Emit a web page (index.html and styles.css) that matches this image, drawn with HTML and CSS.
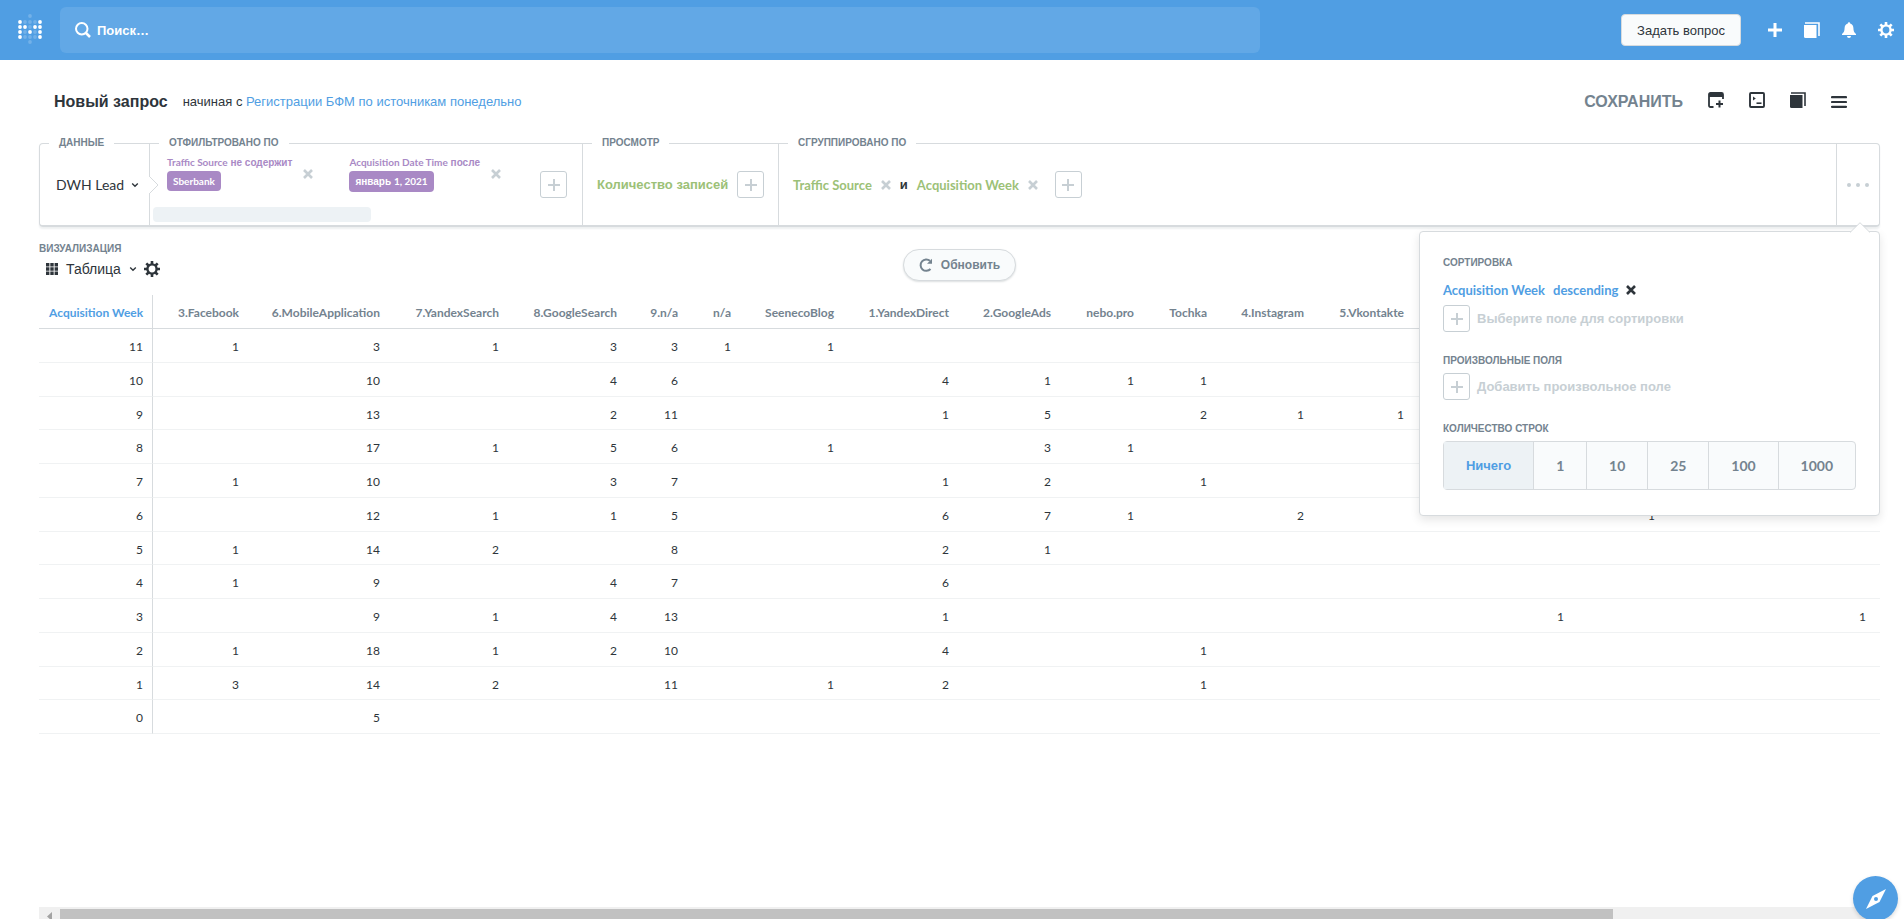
FILE: index.html
```html
<!DOCTYPE html>
<html lang="ru">
<head>
    <meta charset="UTF-8">
    <meta name="viewport" content="width=device-width, initial-scale=1">
    <title>Новый запрос</title>
    <link rel="stylesheet" href="styles.css">
</head>
<body>

<svg class="sprite" aria-hidden="true">
    <symbol id="i-search" viewBox="0 0 32 32"><circle cx="13.5" cy="13.5" r="11.5" fill="none" stroke="currentColor" stroke-width="4"/><path d="M22 22l8 8" stroke="currentColor" stroke-width="5"/></symbol>
    <symbol id="i-plus" viewBox="0 0 14 14"><path d="M7 0v14M0 7h14" stroke="currentColor" stroke-width="3"/></symbol>
    <symbol id="i-add" viewBox="0 0 12 12"><path d="M6 0v12M0 6h12" stroke="currentColor" stroke-width="2"/></symbol>
    <symbol id="i-close" viewBox="0 0 10 10"><path d="M1 1l8 8M9 1L1 9" stroke="currentColor" stroke-width="2.6"/></symbol>
    <symbol id="i-all" viewBox="0 0 16 16"><path d="M0 3h12.5v13H1.500Q0 16 0 14.500z" fill="currentColor"/><path d="M1 1H15v13" fill="none" stroke="currentColor" stroke-width="1.600"/></symbol>
    <symbol id="i-bell" viewBox="0 0 14 16"><path d="M5.800 1.500a1.200 1.200 0 0 1 2.400 0C10.500 2 11.300 4 11.400 6c.1 3 .6 4.500 2.600 6v1H0v-1c2-1.500 2.500-3 2.600-6 .1-2 .9-4 3.200-4.500zM5 14h4a2 2 0 0 1-4 0z" fill="currentColor"/></symbol>
    <symbol id="i-gear" viewBox="0 0 16 16"><circle cx="8" cy="8" r="4.600" fill="none" stroke="currentColor" stroke-width="2.400"/><g stroke="currentColor" stroke-width="2.600"><path d="M8 0v3M8 13v3M0 8h3M13 8h3M2.300 2.300l2.200 2.200M11.500 11.500l2.200 2.200M13.700 2.300l-2.200 2.200M4.500 11.500l-2.200 2.200"/></g></symbol>
    <symbol id="i-dash" viewBox="0 0 16 16"><path d="M5.500 15H2.500Q1 15 1 13.500V2.500Q1 1 2.500 1h11Q15 1 15 2.500V7" fill="none" stroke="currentColor" stroke-width="1.800"/><path d="M1 1h14v4H1z" fill="currentColor"/><path d="M11.500 8.500v7M8 12h7" stroke="currentColor" stroke-width="2"/></symbol>
    <symbol id="i-sql" viewBox="0 0 16 16"><rect x="1" y="1" width="14" height="14" rx="1" fill="none" stroke="currentColor" stroke-width="1.900"/><path d="M4 4.500l2.800 2L4 8.500z" fill="currentColor"/><path d="M7.500 11.200h5" stroke="currentColor" stroke-width="1.600"/></symbol>
    <symbol id="i-menu" viewBox="0 0 16 12"><path d="M1 1.200h14M1 6h14M1 10.800h14" stroke="currentColor" stroke-width="2.200" stroke-linecap="round"/></symbol>
    <symbol id="i-chevron" viewBox="0 0 8 6"><path d="M1.200 1.500L4 4.200l2.800-2.700" fill="none" stroke="currentColor" stroke-width="1.400"/></symbol>
    <symbol id="i-grid" viewBox="0 0 12 12"><path d="M0 0h3.400v3.400H0zM4.300 0h3.400v3.400H4.300zM8.600 0H12v3.400H8.600zM0 4.300h3.400v3.400H0zM4.300 4.300h3.400v3.400H4.300zM8.600 4.300H12v3.400H8.600zM0 8.600h3.400V12H0zM4.300 8.600h3.400V12H4.300zM8.600 8.600H12V12H8.600z" fill="currentColor"/></symbol>
    <symbol id="i-refresh" viewBox="0 0 14 14"><path d="M11.500 11A5.700 5.700 0 1 1 11 2.800" fill="none" stroke="currentColor" stroke-width="2"/><path d="M13 .8v5H8z" fill="currentColor"/></symbol>
</svg>

<header class="nav">
    <a href="#" class="logo" aria-label="Metabase">
        <svg id="logo" width="24" height="32" viewBox="0 0 24 32"></svg>
    </a>
    <div class="search">
        <svg class="icon-16"><use href="#i-search"/></svg>
        <input type="text" placeholder="Поиск…" aria-label="Поиск">
    </div>
    <button class="ask">Задать вопрос</button>
    <nav class="nav-icons">
        <button aria-label="Создать"><svg class="icon-14"><use href="#i-plus"/></svg></button>
        <button aria-label="Обзор"><svg class="icon-16"><use href="#i-all"/></svg></button>
        <button aria-label="Уведомления"><svg class="icon-14 bell"><use href="#i-bell"/></svg></button>
        <button aria-label="Настройки"><svg class="icon-16"><use href="#i-gear"/></svg></button>
    </nav>
</header>

<main class="page">
    <div class="title-bar">
        <h1>Новый запрос</h1>
        <p>начиная с <a href="#">Регистрации БФМ по источникам понедельно</a></p>
        <div class="title-actions">
            <button class="save">СОХРАНИТЬ</button>
            <button aria-label="На дашборд"><svg class="icon-16"><use href="#i-dash"/></svg></button>
            <button aria-label="SQL"><svg class="icon-16"><use href="#i-sql"/></svg></button>
            <button aria-label="Справочник"><svg class="icon-16"><use href="#i-all"/></svg></button>
            <button aria-label="Меню"><svg class="icon-menu"><use href="#i-menu"/></svg></button>
        </div>
    </div>

    <div class="query">
        <section class="query-part data">
            <h2>ДАННЫЕ</h2>
            <button class="database lato">DWH Lead <svg class="icon-8"><use href="#i-chevron"/></svg></button>
            <svg class="pointer" viewBox="0 0 10 18"><path d="M0 0l9 9-9 9" fill="#fff" stroke="#d7dbde"/></svg>
        </section>
        <section class="query-part filters">
            <h2>ОТФИЛЬТРОВАНО ПО</h2>
            <div class="filter-list">
                <div class="filter">
                    <div>
                        <span class="filter-name"><span class="lato">Traffic Source</span> не содержит</span>
                        <span class="pill lato">Sberbank</span>
                    </div>
                    <button class="remove" aria-label="Удалить"><svg class="icon-10"><use href="#i-close"/></svg></button>
                </div>
                <div class="filter">
                    <div>
                        <span class="filter-name"><span class="lato">Acquisition Date Time</span> после</span>
                        <span class="pill">январь <span class="lato">1, 2021</span></span>
                    </div>
                    <button class="remove" aria-label="Удалить"><svg class="icon-10"><use href="#i-close"/></svg></button>
                </div>
            </div>
            <button class="add" aria-label="Добавить фильтр"><svg class="icon-12"><use href="#i-add"/></svg></button>
            <div class="filter-scroll"></div>
        </section>
        <section class="query-part view">
            <h2>ПРОСМОТР</h2>
            <a href="#" class="green">Количество записей</a>
            <button class="add" aria-label="Добавить показатель"><svg class="icon-12"><use href="#i-add"/></svg></button>
        </section>
        <section class="query-part groups">
            <h2>СГРУППИРОВАНО ПО</h2>
            <a href="#" class="green lato">Traffic Source</a>
            <button class="remove" aria-label="Удалить"><svg class="icon-10"><use href="#i-close"/></svg></button>
            <b>и</b>
            <a href="#" class="green lato">Acquisition Week</a>
            <button class="remove" aria-label="Удалить"><svg class="icon-10"><use href="#i-close"/></svg></button>
            <button class="add" aria-label="Добавить группировку"><svg class="icon-12"><use href="#i-add"/></svg></button>
        </section>
        <section class="query-part more">
            <button class="dots" aria-label="Ещё"><i></i><i></i><i></i></button>

            <div class="popover">
                <svg class="popover-arrow" viewBox="0 0 20 11"><path d="M0 10.500L10 .7l10 9.800" fill="#fff" stroke="#d7dbde"/></svg>
                <h3>СОРТИРОВКА</h3>
                <div class="sort">
                    <a href="#" class="lato">Acquisition Week</a>
                    <a href="#" class="lato">descending</a>
                    <button aria-label="Удалить сортировку"><svg class="icon-10"><use href="#i-close"/></svg></button>
                </div>
                <button class="add-row"><span class="add"><svg class="icon-12"><use href="#i-add"/></svg></span>Выберите поле для сортировки</button>
                <h3>ПРОИЗВОЛЬНЫЕ ПОЛЯ</h3>
                <button class="add-row"><span class="add"><svg class="icon-12"><use href="#i-add"/></svg></span>Добавить произвольное поле</button>
                <h3>КОЛИЧЕСТВО СТРОК</h3>
                <div class="limits lato">
                    <button class="active">Ничего</button>
                    <button>1</button>
                    <button>10</button>
                    <button>25</button>
                    <button>100</button>
                    <button>1000</button>
                </div>
            </div>
        </section>
    </div>

    <div class="vis-bar">
        <div class="vis">
            <h2>ВИЗУАЛИЗАЦИЯ</h2>
            <div class="vis-type">
                <button class="vis-name"><svg class="icon-12"><use href="#i-grid"/></svg>Таблица <svg class="icon-8"><use href="#i-chevron"/></svg></button>
                <button aria-label="Настройки визуализации"><svg class="icon-16"><use href="#i-gear"/></svg></button>
            </div>
        </div>
        <button class="refresh"><svg class="icon-14"><use href="#i-refresh"/></svg>Обновить</button>
        <div></div>
    </div>

    <div class="table-wrap">
        <table class="lato">
            <colgroup id="cols"></colgroup>
            <thead><tr id="head"></tr></thead>
            <tbody id="rows"></tbody>
        </table>
    </div>

    <div class="scrollbar">
        <svg width="21" height="17" viewBox="0 0 21 17"><path d="M13 5v9L8 9.500z" fill="#a3a3a3"/></svg>
        <div class="scroll-thumb"></div>
    </div>
</main>

<button class="help" aria-label="Помощь">
    <svg width="20" height="20" viewBox="0 0 20 20"><path d="M20 0l-6.500 13L0 20 6.500 7z" fill="#fff"/><circle cx="10" cy="10" r="2" fill="#509ee3"/></svg>
</button>

<script>
    // the logo is a 5x4 dot matrix with one faint dot above and one below
    const logoRows = ["..o..", "#ooo#", "##o##", "#o#o#", "#ooo#", "..o.."];
    const logoY = [2, 8, 13, 18, 23, 28];
    let dots = "";
    logoRows.forEach((row, y) => {
        row.split("").forEach((dot, x) => {
            if (dot !== ".") {
                dots += `<circle cx="${2 + x * 5}" cy="${logoY[y]}" r="1.9" fill="#fff" opacity="${dot === "#" ? 1 : 0.2}"/>`;
            }
        });
    });
    document.getElementById("logo").innerHTML = dots;

    const columns = [
        ["Acquisition Week", 114], ["3.Facebook", 96], ["6.MobileApplication", 141],
        ["7.YandexSearch", 119], ["8.GoogleSearch", 118], ["9.n/a", 61], ["n/a", 53],
        ["SeenecoBlog", 103], ["1.YandexDirect", 115], ["2.GoogleAds", 102],
        ["nebo.pro", 83], ["Tochka", 73], ["4.Instagram", 97], ["5.Vkontakte", 100],
        ["", 160], ["", 91], ["", 211], ["", 100]
    ];

    const data = [
        [11, 1, 3, 1, 3, 3, 1, 1],
        [10, "", 10, "", 4, 6, "", "", 4, 1, 1, 1],
        [9, "", 13, "", 2, 11, "", "", 1, 5, "", 2, 1, 1],
        [8, "", 17, 1, 5, 6, "", 1, "", 3, 1],
        [7, 1, 10, "", 3, 7, "", "", 1, 2, "", 1],
        [6, "", 12, 1, 1, 5, "", "", 6, 7, 1, "", 2, "", "", 1],
        [5, 1, 14, 2, "", 8, "", "", 2, 1],
        [4, 1, 9, "", 4, 7, "", "", 6],
        [3, "", 9, 1, 4, 13, "", "", 1, "", "", "", "", "", 1, "", 1],
        [2, 1, 18, 1, 2, 10, "", "", 4, "", "", 1],
        [1, 3, 14, 2, "", 11, "", 1, 2, "", "", 1],
        [0, "", 5]
    ];

    document.getElementById("cols").innerHTML = columns.map(c => `<col style="width: ${c[1]}px">`).join("");
    document.getElementById("head").innerHTML = columns.map(c => `<th>${c[0]}</th>`).join("");
    document.getElementById("rows").innerHTML = data.map(row =>
        "<tr>" + columns.map((c, i) => `<td>${row[i] === undefined ? "" : row[i]}</td>`).join("") + "</tr>"
    ).join("");
</script>

</body>
</html>
```
FILE: styles.css
```css
* {
    box-sizing: border-box;
}

body {
    margin: 0;
    height: 100vh;
    display: flex;
    flex-direction: column;
    overflow: hidden;
    background: #fff;
    color: #2e353b;
    font-family: "Liberation Sans", Arial, sans-serif;
    font-size: 13px;
}

h1, h2, h3, p {
    margin: 0;
}

a {
    color: #509ee3;
    text-decoration: none;
}

button {
    padding: 0;
    border: none;
    background: none;
    color: inherit;
    font: inherit;
    white-space: nowrap;
    cursor: pointer;
}

svg {
    display: block;
    flex: none;
}

.lato {
    font-family: Lato, "Liberation Sans", sans-serif;
}

.sprite {
    position: absolute;
    width: 0;
    height: 0;
}

.icon-8 { width: 8px; height: 6px; }
.icon-10 { width: 10px; height: 10px; }
.icon-12 { width: 12px; height: 12px; }
.icon-14 { width: 14px; height: 14px; }
.icon-16 { width: 16px; height: 16px; }
.icon-menu { width: 16px; height: 12px; }
.bell { height: 16px; }

/* top bar */
.nav {
    display: flex;
    align-items: center;
    flex: none;
    height: 60px;
    padding: 0 10px 0 18px;
    background: #509ee3;
    color: #fff;
}

.logo {
    width: 42px;
}

.search {
    display: flex;
    align-items: center;
    gap: 6px;
    flex: 1;
    max-width: 1200px;
    height: 46px;
    padding: 0 15px;
    border-radius: 6px;
    background: #62a8e6;
}

.search input {
    flex: 1;
    padding: 0;
    border: none;
    outline: none;
    background: none;
    color: #fff;
    font: bold 13px "Liberation Sans", Arial, sans-serif;
}

.search input::placeholder {
    color: #fff;
}

.ask {
    height: 32px;
    margin-left: auto;
    padding: 0 15px;
    border: 1px solid #d7dbde;
    border-radius: 4px;
    background: #f9fbfc;
    color: #2e353b;
}

.nav-icons {
    display: flex;
    align-items: center;
    gap: 22px;
    margin-left: 27px;
}

/* page */
.page {
    display: flex;
    flex-direction: column;
    flex: 1;
    min-height: 0;
    padding: 0 24px 0 39px;
}

.title-bar {
    display: flex;
    align-items: center;
    height: 83px;
    padding: 0 33px 0 15px;
}

.title-bar h1 {
    margin-right: 15px;
    font-size: 16px;
}

.title-actions {
    display: flex;
    align-items: center;
    gap: 25px;
    margin-left: auto;
}

.title-actions .icon-16 {
    margin-bottom: 4px;
}

.save {
    color: #74838f;
    font-size: 16px;
    font-weight: bold;
}

.query {
    display: flex;
    flex: none;
    height: 84px;
    border: 1px solid #d7dbde;
    border-bottom-width: 2px;
    border-radius: 4px;
    box-shadow: 0 2px 2px #eef0f1;
}

.query-part {
    display: flex;
    align-items: center;
    position: relative;
    padding: 0 12px;
    border-left: 1px solid #d7dbde;
}

.query-part:first-child {
    border-left: none;
}

h2, h3 {
    color: #74838f;
    font-size: 10px;
    line-height: 12px;
}

/* section names sit on the top border */
.query-part h2 {
    position: absolute;
    top: -7px;
    left: 9px;
    padding: 0 10px;
    background: #fff;
    white-space: nowrap;
}

.data {
    width: 109px;
    padding-left: 16px;
}

.database {
    display: flex;
    align-items: center;
    gap: 7px;
    font-size: 14px;
}

.pointer {
    position: absolute;
    right: -10px;
    width: 10px;
    height: 18px;
    z-index: 1;
}

.filters {
    width: 433px;
    padding: 0 15px 0 17px;
    justify-content: space-between;
}

.filter-list {
    display: flex;
    gap: 36px;
    margin-bottom: 22px;
}

.filter {
    display: flex;
    align-items: center;
    gap: 11px;
}

.filter-name {
    display: block;
    margin-bottom: 2px;
    color: #a989c5;
    font-size: 10px;
    font-weight: bold;
    line-height: 12px;
    white-space: nowrap;
}

.pill {
    display: inline-block;
    padding: 0 6px;
    border-radius: 4px;
    background: #a989c5;
    color: #fff;
    font-size: 10px;
    font-weight: bold;
    line-height: 20px;
}

.remove {
    color: #c7cfd4;
}

.add {
    display: flex;
    align-items: center;
    justify-content: center;
    flex: none;
    width: 27px;
    height: 27px;
    border: 1px solid #c7cfd4;
    border-radius: 3px;
    color: #c7cfd4;
}

.filter-scroll {
    position: absolute;
    left: 3px;
    bottom: 3px;
    width: 218px;
    height: 15px;
    border-radius: 4px;
    background: #edf2f5;
}

.green {
    color: #9cc177;
    font-weight: bold;
    white-space: nowrap;
}

.view {
    width: 196px;
    padding: 0 14px;
    justify-content: space-between;
}

.groups {
    flex: 1;
    gap: 9px;
    padding-left: 14px;
}

.groups .add {
    margin-left: 8px;
}

.more {
    width: 43px;
    justify-content: center;
    padding: 0;
}

.dots {
    display: flex;
    gap: 5px;
}

.dots i {
    width: 4px;
    height: 4px;
    border-radius: 50%;
    background: #c7cfd4;
}

.popover {
    position: absolute;
    top: 87px;
    right: -1px;
    z-index: 2;
    width: 461px;
    padding: 25px 23px;
    border: 1px solid #d7dbde;
    border-radius: 4px;
    background: #fff;
    box-shadow: 0 4px 10px rgba(0, 0, 0, 0.1);
}

.popover-arrow {
    position: absolute;
    top: -10px;
    right: 9px;
    width: 20px;
    height: 11px;
}

.popover h3 {
    margin-bottom: 6px;
}

.sort {
    display: flex;
    align-items: center;
    gap: 8px;
    margin-top: 12px;
    margin-bottom: 6px;
    font-weight: bold;
    line-height: 18px;
}

.add-row {
    display: flex;
    align-items: center;
    gap: 7px;
    margin-bottom: 23px;
    color: #c7cfd4;
    font-weight: bold;
}

.limits {
    display: flex;
    border: 1px solid #d7dbde;
    border-radius: 4px;
    background: #f9fbfc;
    color: #74838f;
    font-size: 14px;
}

.limits button {
    flex: auto;
    height: 47px;
    padding: 0 20px;
    border-left: 1px solid #d7dbde;
    font-weight: bold;
}

.limits .active {
    border-left: none;
    background: #edf2f5;
    color: #509ee3;
    font-family: "Liberation Sans", Arial, sans-serif;
    font-size: 13px;
}

/* visualization */
.vis-bar {
    display: grid;
    grid-template-columns: 1fr auto 1fr;
    align-items: center;
    flex: none;
    height: 52px;
    margin-top: 16px;
}

.vis {
    align-self: start;
}

.vis-type {
    display: flex;
    align-items: center;
    gap: 7px;
    margin: 6px 0 0 7px;
}

.vis-name {
    display: flex;
    align-items: center;
    gap: 8px;
    font-size: 14px;
}

.refresh {
    display: flex;
    align-items: center;
    gap: 8px;
    height: 32px;
    margin-bottom: 8px;
    padding: 0 15px;
    border: 1px solid #d7dbde;
    border-radius: 16px;
    background: #f9fbfc;
    box-shadow: 0 1px 2px #dcdfe0;
    color: #74838f;
    font-size: 12px;
    font-weight: bold;
}

.table-wrap {
    flex: 1;
    min-height: 0;
    overflow: hidden;
}

table {
    table-layout: fixed;
    width: 1837px;
    border-collapse: separate;
    border-spacing: 0;
    font-size: 12px;
}

th, td {
    height: 34px;
    padding: 2px 10px 0;
    border-bottom: 1px solid #f0f2f3;
    text-align: right;
    white-space: nowrap;
}

th {
    border-bottom-color: #d7dbde;
    color: #74838f;
}

/* every fourth row is a pixel shorter */
tr:nth-child(4n+3) td {
    height: 33px;
}

th:first-child, td:first-child {
    padding-right: 9px;
    border-right: 1px solid #d7dbde;
}

th:first-child {
    color: #509ee3;
}

.scrollbar {
    display: flex;
    flex: none;
    height: 17px;
    margin-bottom: -5px;
    background: #f0f0f0;
}

.scroll-thumb {
    flex: 1;
    margin: 2px 267px 2px 0;
    background: #c1c1c1;
}

.help {
    display: flex;
    align-items: center;
    justify-content: center;
    position: fixed;
    right: 6px;
    bottom: -2px;
    width: 45px;
    height: 45px;
    border-radius: 50%;
    background: #509ee3;
    box-shadow: 0 2px 4px rgba(0, 0, 0, 0.15);
}
```
